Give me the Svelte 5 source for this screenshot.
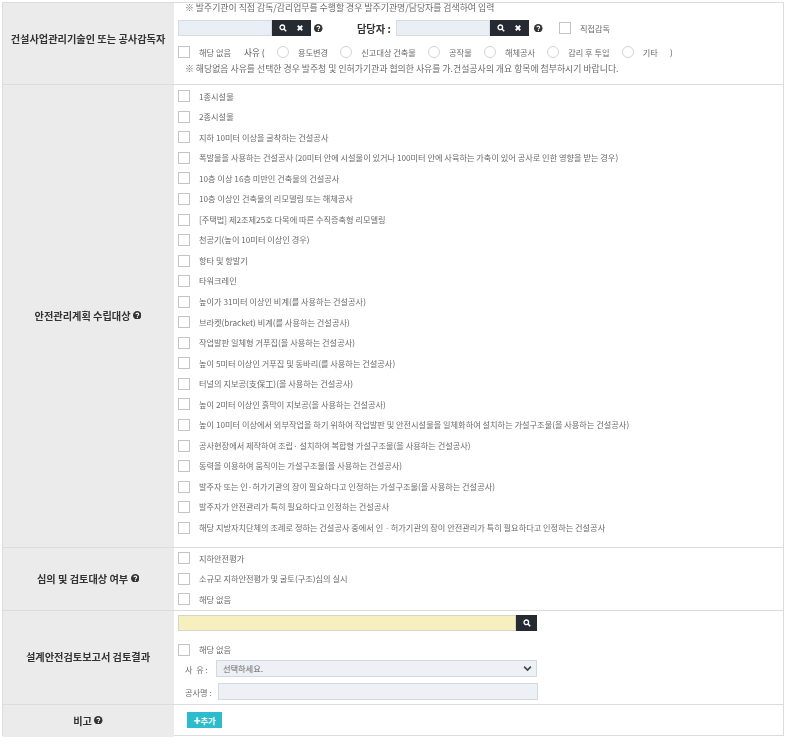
<script>
  const reasons = ['용도변경', '신고대상 건축물', '공작물', '해체공사', '감리 후 투입', '기타'];
  const targets = [
    '1종시설물', '2종시설물', '지하 10미터 이상을 굴착하는 건설공사',
    '폭발물을 사용하는 건설공사 (20미터 안에 시설물이 있거나 100미터 안에 사육하는 가축이 있어 공사로 인한 영향을 받는 경우)',
    '10층 이상 16층 미만인 건축물의 건설공사', '10층 이상인 건축물의 리모델링 또는 해체공사',
    '[주택법] 제2조제25호 다목에 따른 수직증축형 리모델링', '천공기(높이 10미터 이상인 경우)', '항타 및 항발기', '타워크레인',
    '높이가 31미터 이상인 비계(를 사용하는 건설공사)', '브라켓(bracket) 비계(를 사용하는 건설공사)',
    '작업발판 일체형 거푸집(을 사용하는 건설공사)', '높이 5미터 이상인 거푸집 및 동바리(를 사용하는 건설공사)',
    '터널의 지보공(支保工)(을 사용하는 건설공사)', '높이 2미터 이상인 흙막이 지보공(을 사용하는 건설공사)',
    '높이 10미터 이상에서 외부작업을 하기 위하여 작업발판 및 안전시설물을 일체화하여 설치하는 가설구조물(을 사용하는 건설공사)',
    '공사현장에서 제작하여 조립· 설치하여 복합형 가설구조물(을 사용하는 건설공사)', '동력을 이용하여 움직이는 가설구조물(을 사용하는 건설공사)',
    '발주자 또는 인·허가기관의 장이 필요하다고 인정하는 가설구조물(을 사용하는 건설공사)', '발주자가 안전관리가 특히 필요하다고 인정하는 건설공사',
    '해당 지방자치단체의 조례로 정하는 건설공사 중에서 인ㆍ허가기관의 장이 안전관리가 특히 필요하다고 인정하는 건설공사'
  ];
  const reviews = ['지하안전평가', '소규모 지하안전평가 및 굴토(구조)심의 실시', '해당 없음'];
</script>

{#snippet help()}
  <svg class="help" viewBox="0 0 16 16" aria-hidden="true">
    <circle cx="8" cy="8" r="8" fill="#333" />
    <path d="M5.3 6.2C5.5 4.6 6.6 4 8 4c1.6 0 2.8.9 2.8 2.2 0 2-2.4 1.9-2.4 3.6" fill="none" stroke="#fff" stroke-width="2" />
    <rect x="7.2" y="10.8" width="2.2" height="2.2" fill="#fff" />
  </svg>
{/snippet}

{#snippet search()}
  <svg class="glyph" viewBox="0 0 16 16" aria-hidden="true">
    <circle cx="6.6" cy="6.6" r="4.6" fill="none" stroke="#fff" stroke-width="2.6" />
    <path d="M10 10l4.5 4.5" stroke="#fff" stroke-width="3" />
  </svg>
{/snippet}

{#snippet times()}
  <svg class="glyph" viewBox="0 0 16 16" aria-hidden="true">
    <path d="M3.5 3.5l9 9M12.5 3.5l-9 9" stroke="#fff" stroke-width="3.6" />
  </svg>
{/snippet}

<div class="page">
  <div class="table">
    <div class="th first">건설사업관리기술인 또는 공사감독자</div>
    <div class="td first">
      <p class="note top">※ 발주기관이 직접 감독/감리업무를 수행할 경우 발주기관명/담당자를 검색하여 입력</p>
      <div class="searchline">
        <span class="field"></span>
        <span class="btns">{@render search()}{@render times()}</span>
        <span class="h1">{@render help()}</span>
        <strong class="person">담당자 :</strong>
        <span class="field"></span>
        <span class="btns">{@render search()}{@render times()}</span>
        <span class="h2">{@render help()}</span>
        <span class="box direct"></span>
        <span class="direct-label">직접감독</span>
      </div>
      <div class="reasonline">
        <span class="box"></span>
        <span class="none">해당 없음</span>
        <span class="why">사유 (</span>
        {#each reasons as r}
          <span class="radio"></span><span class="rlabel">{r}</span>
        {/each}
        <span class="close">)</span>
      </div>
      <p class="note">※ 해당없음 사유를 선택한 경우 발주청 및 인허가기관과 협의한 사유를 가.건설공사의 개요 항목에 첨부하시기 바랍니다.</p>
    </div>

    <div class="th">안전관리계획 수립대상&nbsp;{@render help()}</div>
    <div class="td list targets">
      {#each targets as t}
        <div class="check"><span class="box"></span><span class="ctext">{t}</span></div>
      {/each}
    </div>

    <div class="th">심의 및 검토대상 여부&nbsp;{@render help()}</div>
    <div class="td list reviews">
      {#each reviews as t}
        <div class="check"><span class="box"></span><span class="ctext">{t}</span></div>
      {/each}
    </div>

    <div class="th">설계안전검토보고서 검토결과</div>
    <div class="td report">
      <div class="yellowline">
        <span class="yellow"></span>
        <span class="btn1">{@render search()}</span>
      </div>
      <div class="check"><span class="box"></span><span class="ctext">해당 없음</span></div>
      <div class="formline">
        <span class="flabel l1">사 &nbsp;유 :</span>
        <span class="select">선택하세요.
          <svg class="chev" viewBox="0 0 12 8" aria-hidden="true"><path d="M1.5 1.5L6 6l4.5-4.5" fill="none" stroke="#444" stroke-width="2.2" /></svg>
        </span>
      </div>
      <div class="formline">
        <span class="flabel l2">공사명 :</span>
        <span class="project"></span>
      </div>
    </div>

    <div class="th last">비고&nbsp;{@render help()}</div>
    <div class="td last add">
      <span class="addbtn"><span class="plus">✚</span>추가</span>
    </div>
  </div>
</div>

<style>
  :global(body) {
    margin: 0;
    background: #fff;
  }
  .page {
    width: 800px;
    height: 749px;
    overflow: hidden;
    padding: 2px 16px 0 2px;
    box-sizing: border-box;
    font-family: "Noto Sans CJK KR", "Noto Sans", sans-serif;
    font-size: 8.2px;
    color: #6a6a6a;
    filter: blur(0.35px);
  }
  .table {
    display: grid;
    grid-template-columns: 171px 1fr;
    grid-template-rows: 82px 463px 63px 94px 32px;
    border: 1px solid #dcdcdc;
    height: 734px;
    box-sizing: border-box;
  }
  .th {
    display: flex;
    align-items: center;
    justify-content: center;
    background: #ebebeb;
    color: #333;
    font-size: 10.2px;
    font-weight: 700;
    border-bottom: 1px solid #dcdcdc;
    box-sizing: border-box;
    white-space: nowrap;
    padding: 0 1px 2px 0;
  }
  .th.first { padding-bottom: 11px; }
  .td {
    border-bottom: 1px solid #dcdcdc;
    box-sizing: border-box;
    min-width: 0;
    padding-left: 4px;
  }
  .last { border-bottom: 0; }
  .note {
    margin: 0 0 0 7px;
    height: 12px;
    line-height: 12px;
    white-space: nowrap;
    font-size: 8.9px;
  }
  .note.top { height: 10px; line-height: 10px; }
  .searchline {
    display: flex;
    align-items: center;
    height: 16px;
    margin-top: 7px;
  }
  .field {
    width: 94px;
    height: 16px;
    background: #eaeef5;
    border: 1px solid #d5dae3;
    box-sizing: border-box;
  }
  .btns {
    width: 39px;
    height: 16px;
    background: #252a33;
    display: flex;
    align-items: center;
    justify-content: space-around;
    padding: 0 3px;
    box-sizing: border-box;
  }
  .glyph { width: 8px; height: 8px; }
  .help { width: 8.5px; height: 8.5px; flex: none; }
  .h1 { margin-left: 3px; width: 43px; display: flex; }
  .h2 { margin-left: 5px; width: 25px; display: flex; }
  .person {
    width: 39px;
    font-size: 10.2px;
    color: #333;
    font-weight: 700;
    white-space: nowrap;
  }
  .box {
    width: 12px;
    height: 12px;
    flex: none;
    border: 1px solid #c4c4c4;
    box-sizing: border-box;
    background: #fff;
  }
  .direct-label { margin-left: 9px; }
  .reasonline {
    display: flex;
    align-items: center;
    height: 14px;
    margin-top: 9px;
    white-space: nowrap;
  }
  .none { margin-left: 9px; width: 45px; }
  .why { width: 33px; color: #555; font-size: 8.6px; }
  .radio {
    width: 12px;
    height: 12px;
    flex: none;
    border: 1px solid #d2d2d2;
    border-radius: 50%;
    box-sizing: border-box;
  }
  .rlabel { margin-left: 9px; margin-right: 12.2px; }
  .first > .note:last-child { margin-top: 4px; }
  .list { padding-top: 1px; }
  .check {
    display: flex;
    align-items: center;
    gap: 9px;
    height: 20.55px;
    white-space: nowrap;
  }
  .ctext { padding-bottom: 1.5px; }
  .reviews { padding-top: 0; }
  .report { padding-top: 4px; }
  .yellowline { display: flex; height: 16px; margin-bottom: 9px; }
  .yellow {
    width: 338px;
    background: #f7efbd;
    border: 1px solid #d5d5c9;
    box-sizing: border-box;
  }
  .btn1 {
    width: 21px;
    background: #252a33;
    display: flex;
    align-items: center;
    justify-content: center;
  }
  .formline {
    display: flex;
    align-items: center;
    height: 17px;
    margin-bottom: 6px;
    white-space: nowrap;
  }
  .report .check { height: 20px; margin-bottom: 0; }
  .flabel { padding-left: 7px; box-sizing: border-box; }
  .l1 { width: 38px; }
  .l2 { width: 40px; }
  .select {
    width: 321px;
    height: 17px;
    line-height: 15px;
    padding-left: 6px;
    background: #edf0f5;
    border: 1px solid #d3d8e2;
    box-sizing: border-box;
    position: relative;
  }
  .chev {
    position: absolute;
    right: 4px;
    top: 4px;
    width: 9px;
    height: 7px;
  }
  .project {
    width: 320px;
    height: 17px;
    background: #edf0f5;
    border: 1px solid #d3d8e2;
    box-sizing: border-box;
  }
  .add { padding: 7px 0 0 13px; }
  .addbtn {
    display: flex;
    width: 35px;
    height: 16px;
    align-items: center;
    justify-content: center;
    background: #2cbccb;
    color: #fff;
    font-weight: 700;
  }
  .plus { font-size: 7px; }
</style>
